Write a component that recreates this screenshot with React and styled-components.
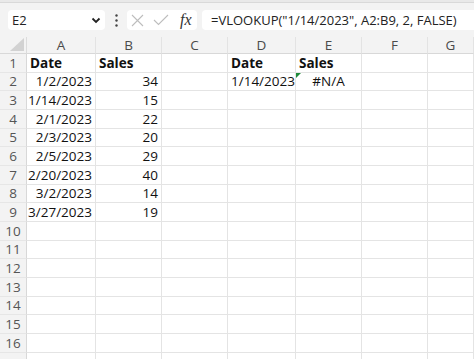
import React from 'react'
import styled, { createGlobalStyle } from 'styled-components'

const GlobalStyle = createGlobalStyle`
  html, body {
    margin: 0;
    padding: 0;
    background: #ffffff;
    overflow: hidden;
  }
`

const Sheet = styled.div`
  width: 474px;
  height: 359px;
  overflow: hidden;
  background: #ffffff;
  font-family: 'Open Sans', 'Noto Sans', sans-serif;
  display: flex;
  flex-direction: column;
`

const TopStrip = styled.div`
  height: 2px;
  background: #e9e9e9;
  border-bottom: 1px solid #d9d9d9;
  flex: none;
`

const Toolbar = styled.div`
  height: 34px;
  flex: none;
  background: #f3f3f3;
  display: flex;
  align-items: center;
  padding-left: 8px;
`

const NameBox = styled.div`
  width: 97px;
  height: 20px;
  box-sizing: border-box;
  background: #ffffff;
  border-radius: 4px;
  display: flex;
  align-items: center;
  justify-content: space-between;
  padding: 0 4px 0 4px;
  font-size: 13px;
  color: #222;
`

const Grip = styled.div`
  width: 22px;
  display: flex;
  justify-content: center;
  color: #444;
`

const ActionBox = styled.div`
  width: 70px;
  height: 20px;
  background: #ffffff;
  border-radius: 4px;
  display: flex;
  align-items: center;
  padding-left: 4px;
  gap: 9px;
  box-sizing: border-box;
`

const Fx = styled.span`
  font-family: 'Liberation Serif', 'DejaVu Serif', serif;
  font-style: italic;
  font-size: 16px;
  color: #333;
  margin-left: 2px;
`

const FormulaBox = styled.div`
  flex: 1;
  height: 20px;
  margin-left: 5px;
  background: #ffffff;
  border-radius: 4px 0 0 4px;
  display: flex;
  align-items: center;
  padding-left: 9px;
  font-size: 13px;
  color: #222;
  white-space: nowrap;
  overflow: hidden;
`

const Grid = styled.div`
  flex: 1;
  display: grid;
  grid-template-columns: 27px 69px 66px 66px 68px 66px 66px 1fr;
  grid-template-rows: 17px;
  grid-auto-rows: 18.67px;
  font-size: 13.5px;
  overflow: hidden;
`

const ColHead = styled.div`
  background: #f3f3f3;
  border-right: 1px solid ${p => (p.$corner ? '#dcdcdc' : '#e3e3e3')};
  border-bottom: 1px solid #d8d8d8;
  box-sizing: border-box;
  display: flex;
  align-items: center;
  justify-content: center;
  color: #4a4a4a;
  position: relative;
  overflow: hidden;
`

const RowHead = styled.div`
  background: #f3f3f3;
  border-right: 1px solid #d8d8d8;
  border-bottom: 1px solid #e6e6e6;
  box-sizing: border-box;
  display: flex;
  align-items: center;
  justify-content: center;
  color: #555;
`

const Cell = styled.div`
  border-right: 1px solid #e4e4e4;
  border-bottom: 1px solid #e4e4e4;
  box-sizing: border-box;
  display: flex;
  align-items: center;
  justify-content: ${p => (p.$align === 'right' ? 'flex-end' : p.$align === 'center' ? 'center' : 'flex-start')};
  padding: 0 3px;
  color: #111;
  font-weight: ${p => (p.$bold ? 700 : 400)};
  white-space: nowrap;
  position: relative;
`

const ErrorFlag = styled.span`
  position: absolute;
  left: 0;
  top: 0;
  width: 0;
  height: 0;
  border-top: 5px solid #1f8a3a;
  border-right: 5px solid transparent;
`

const cols = ['A', 'B', 'C', 'D', 'E', 'F', 'G']

const data = [
  [{ v: 'Date', bold: true }, { v: 'Sales', bold: true }, null, { v: 'Date', bold: true }, { v: 'Sales', bold: true }],
  [{ v: '1/2/2023', align: 'right' }, { v: '34', align: 'right' }, null, { v: '1/14/2023' }, { v: '#N/A', align: 'center', flag: true }],
  [{ v: '1/14/2023', align: 'right' }, { v: '15', align: 'right' }],
  [{ v: '2/1/2023', align: 'right' }, { v: '22', align: 'right' }],
  [{ v: '2/3/2023', align: 'right' }, { v: '20', align: 'right' }],
  [{ v: '2/5/2023', align: 'right' }, { v: '29', align: 'right' }],
  [{ v: '2/20/2023', align: 'right' }, { v: '40', align: 'right' }],
  [{ v: '3/2/2023', align: 'right' }, { v: '14', align: 'right' }],
  [{ v: '3/27/2023', align: 'right' }, { v: '19', align: 'right' }],
]

const Chevron = () => (
  <svg width="10" height="7" viewBox="0 0 10 7">
    <path d="M1.5 1.5 L5 5 L8.5 1.5" fill="none" stroke="#222" strokeWidth="1.8" />
  </svg>
)

const Dots = () => (
  <svg width="3" height="13" viewBox="0 0 3 13">
    <circle cx="1.5" cy="1.5" r="1.2" fill="#444" />
    <circle cx="1.5" cy="6.5" r="1.2" fill="#444" />
    <circle cx="1.5" cy="11.5" r="1.2" fill="#444" />
  </svg>
)

const Cross = () => (
  <svg width="13" height="13" viewBox="0 0 13 13">
    <path d="M1 1 L12 12 M12 1 L1 12" stroke="#bdbdbd" strokeWidth="1.1" fill="none" />
  </svg>
)

const Check = () => (
  <svg width="16" height="12" viewBox="0 0 16 12">
    <path d="M1 6 L5.5 10.5 L15 1" stroke="#bdbdbd" strokeWidth="1.1" fill="none" />
  </svg>
)

const CornerMark = () => (
  <svg width="14" height="13" viewBox="0 0 14 13" style={{ position: 'absolute', right: 2, bottom: 2 }}>
    <polygon points="14,0 14,13 0,13" fill="#d2d2d2" />
  </svg>
)

export default function App() {
  // the 17th row only peeks in below the bottom edge, its number is hidden
  const rows = Array.from({ length: 17 }, (_, i) => i + 1)
  return (
    <Sheet>
      <GlobalStyle />
      <TopStrip />
      <Toolbar>
        <NameBox>
          <span>E2</span>
          <Chevron />
        </NameBox>
        <Grip>
          <Dots />
        </Grip>
        <ActionBox>
          <Cross />
          <Check />
          <Fx>fx</Fx>
        </ActionBox>
        <FormulaBox>=VLOOKUP("1/14/2023", A2:B9, 2, FALSE)</FormulaBox>
      </Toolbar>
      <Grid>
        <ColHead $corner>
          <CornerMark />
        </ColHead>
        {cols.map(c => (
          <ColHead key={c}>{c}</ColHead>
        ))}
        {rows.map(r => (
          <React.Fragment key={r}>
            <RowHead>{r < 17 ? r : ''}</RowHead>
            {cols.map((c, ci) => {
              const cell = data[r - 1] && data[r - 1][ci]
              return (
                <Cell key={c} $align={cell?.align} $bold={cell?.bold}>
                  {cell?.flag && <ErrorFlag />}
                  {cell?.v}
                </Cell>
              )
            })}
          </React.Fragment>
        ))}
      </Grid>
    </Sheet>
  )
}
